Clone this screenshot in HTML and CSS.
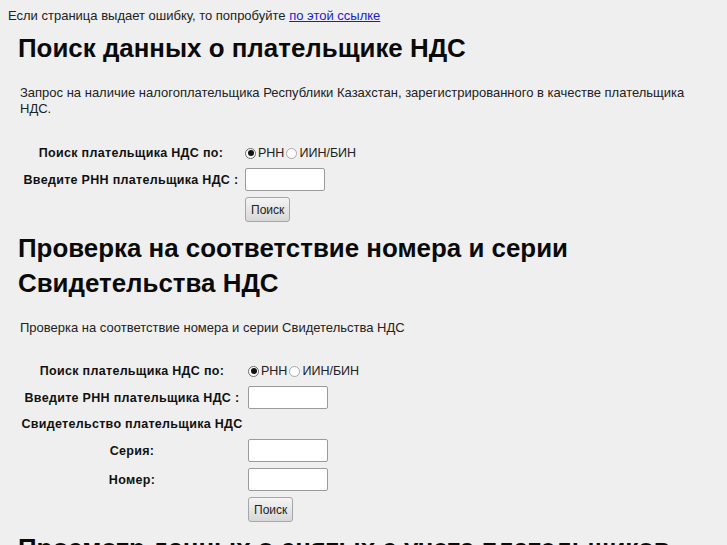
FILE: index.html
```html
<!DOCTYPE html>
<html lang="ru">
<head>
<meta charset="utf-8">
<title>Плательщики НДС</title>
<link rel="stylesheet" href="styles.css">
</head>
<body>
<div class="notice">Если страница выдает ошибку, то попробуйте <a href="#">по этой ссылке</a></div>

<section class="block first">
  <h1 class="title">Поиск данных о плательщике НДС</h1>
  <p class="desc">Запрос на наличие налогоплательщика Республики Казахстан, зарегистрированного в качестве плательщика НДС.</p>
  <form class="form form-a">
    <div class="label">Поиск плательщика НДС по:</div>
    <div class="ctrl radios">
      <label class="radio"><span class="dot on"></span>РНН</label>
      <label class="radio"><span class="dot"></span>ИИН/БИН</label>
    </div>
    <div class="label">Введите РНН плательщика НДС :</div>
    <div class="ctrl"><span class="field"></span></div>
    <div class="label"></div>
    <div class="ctrl"><button type="button" class="btn">Поиск</button></div>
  </form>
</section>

<section class="block">
  <h1 class="title">Проверка на соответствие номера и серии Свидетельства НДС</h1>
  <p class="desc">Проверка на соответствие номера и серии Свидетельства НДС</p>
  <form class="form form-b">
    <div class="label">Поиск плательщика НДС по:</div>
    <div class="ctrl radios">
      <label class="radio"><span class="dot on"></span>РНН</label>
      <label class="radio"><span class="dot"></span>ИИН/БИН</label>
    </div>
    <div class="label">Введите РНН плательщика НДС :</div>
    <div class="ctrl"><span class="field"></span></div>
    <div class="label">Свидетельство плательщика НДС</div>
    <div class="ctrl"></div>
    <div class="label">Серия:</div>
    <div class="ctrl"><span class="field"></span></div>
    <div class="label">Номер:</div>
    <div class="ctrl"><span class="field"></span></div>
    <div class="label"></div>
    <div class="ctrl"><button type="button" class="btn">Поиск</button></div>
  </form>
</section>

<section class="block">
  <h1 class="title">Просмотр данных о снятых с учета плательщиков НДС</h1>
</section>
</body>
</html>
```

FILE: styles.css
```css
html, body {
  margin: 0;
  padding: 0;
  background: #efefef;
}
body {
  font-family: "Liberation Sans", Arial, sans-serif;
  font-size: 13px;
  color: #111;
  padding: 8px 8px 0 8px;
}
.notice {
  font-size: 13px;
  line-height: 16px;
  color: #222;
}
.notice a {
  color: #1c1ccc;
}
.block {
  padding-left: 10px;
  padding-top: 8.5px;
}
.block.first {
  padding-top: 6.5px;
}
.title {
  font-size: 25.9px;
  line-height: 35px;
  font-weight: bold;
  color: #0a0a0a;
  margin: 0;
}
.desc {
  margin: 19.5px 0 0 2px;
  font-size: 13px;
  line-height: 16px;
  color: #222;
}
.form {
  display: grid;
  grid-template-columns: 220px auto;
  column-gap: 4px;
  row-gap: 6px;
  align-items: center;
  margin: 27px 0 0 3px;
}
.form-b {
  grid-template-columns: 222px auto;
  column-gap: 5px;
  margin-top: 26px;
}
.label {
  text-align: center;
  font-weight: bold;
  font-size: 12.5px;
  letter-spacing: 0.3px;
  white-space: nowrap;
  color: #111;
  min-height: 18px;
  line-height: 18px;
}
.ctrl {
  min-height: 18px;
  display: flex;
  align-items: center;
}
.radios {
  gap: 2px;
}
.radio {
  display: inline-flex;
  align-items: center;
  font-size: 12.5px;
  color: #222;
}
.dot {
  box-sizing: border-box;
  width: 11px;
  height: 11px;
  border: 1px solid #a8a8a8;
  border-radius: 50%;
  background: #fff;
  margin-right: 2px;
  position: relative;
}
.dot.on {
  border-color: #6a6a6a;
}
.dot.on::after {
  content: "";
  position: absolute;
  left: 1.5px;
  top: 1.5px;
  width: 6px;
  height: 6px;
  border-radius: 50%;
  background: #111;
}
.field {
  display: block;
  box-sizing: border-box;
  width: 80px;
  height: 23px;
  background: #fff;
  border: 1px solid #9a9a9a;
  border-radius: 2px;
}
.btn {
  font-family: "Liberation Sans", Arial, sans-serif;
  font-size: 12px;
  color: #222;
  height: 25px;
  padding: 0 5px;
  border: 1px solid #a6a6a6;
  border-radius: 3px;
  background: linear-gradient(#f4f4f4, #d8d8d8);
  margin: 0;
}
```
